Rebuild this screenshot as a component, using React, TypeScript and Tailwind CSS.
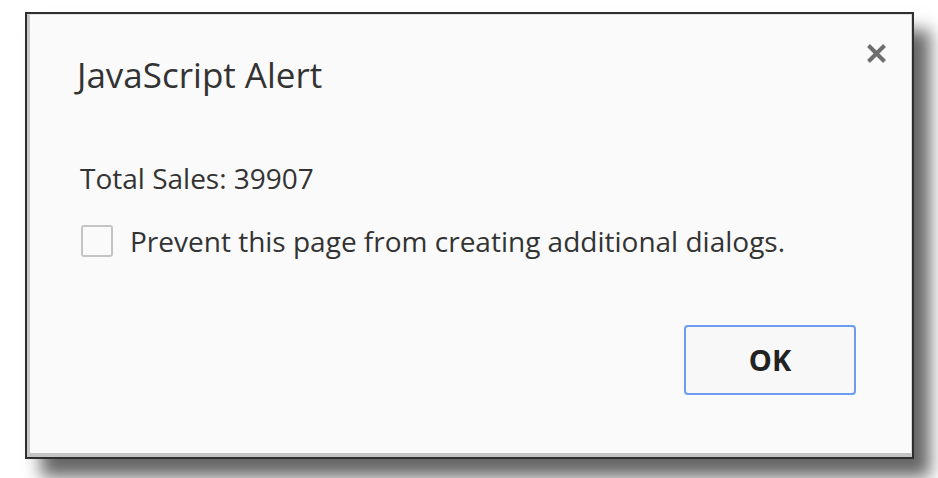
export default function App() {
  return (
    <div className="w-[938px] h-[478px] bg-white overflow-hidden" style={{ fontFamily: '"Open Sans", "Noto Sans", sans-serif' }}>
      <div className="ml-[25px] mt-[12px] w-[889px] h-[447px] border-2 border-[#2e2e2e] bg-[#fafafa] shadow-[16px_18px_16px_rgba(0,0,0,0.6)] flex flex-col">
        <div className="flex-1 flex flex-col border-l-[3px] border-b-[4px] border-r border-l-[#c8c8c8] border-b-[#c4c4c4] border-r-[#d8d8d8] border-t border-t-[#e0e0e0]">
          <div className="flex items-start justify-between pl-[47px] pr-[24px]">
            <div className="mt-[40px] text-[35px] leading-[40px] text-[#333]">JavaScript Alert</div>
            <svg className="mt-[28px]" width="21" height="21" viewBox="0 0 21 21">
              <path d="M2.5 2.5 L18.5 18.5 M18.5 2.5 L2.5 18.5" stroke="#6e6e6e" strokeWidth="4" strokeLinecap="butt" />
            </svg>
          </div>
          <div className="pl-[50px] mt-[66px] text-[28px] leading-[34px] text-[#333]">Total Sales: 39907</div>
          <div className="pl-[51px] mt-[29px] flex items-center gap-[17px]">
            <div className="w-[32px] h-[32px] rounded-[3px] border-2 border-[#c4c4c4] bg-[#fafafa]" />
            <div className="text-[28px] leading-[34px] text-[#333]">Prevent this page from creating additional dialogs.</div>
          </div>
          <div className="flex justify-end pr-[55px] mt-[67px]">
            <div className="w-[172px] h-[70px] rounded-[4px] border-2 border-[#6d9cf0] bg-[#f8f8f8] flex items-center justify-center text-[29px] font-bold text-[#222]">OK</div>
          </div>
        </div>
      </div>
    </div>
  );
}
